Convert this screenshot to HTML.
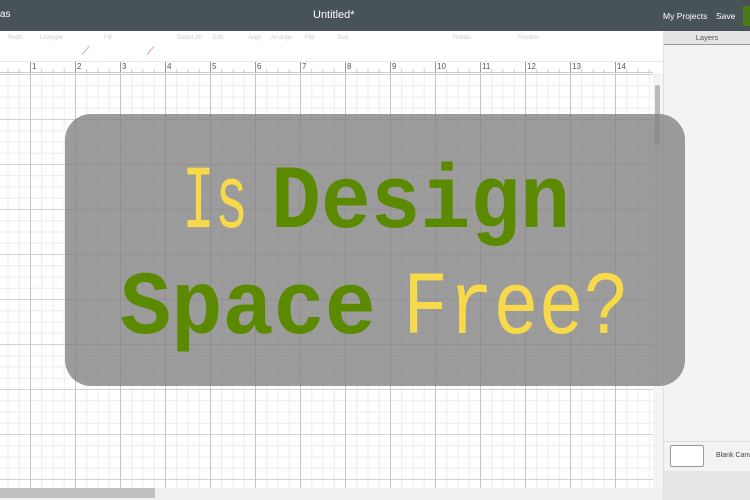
<!DOCTYPE html>
<html><head><meta charset="utf-8"><style>
*{margin:0;padding:0;box-sizing:border-box}
body{width:750px;height:500px;overflow:hidden;position:relative;background:#fff;font-family:"Liberation Sans",sans-serif}
.hdr{position:absolute;left:0;top:0;width:750px;height:31px;background:#485358;color:#fff}
.hdr span{position:absolute;top:9px;font-size:10px}
.tb{position:absolute;left:0;top:31px;width:663px;height:31px;background:#fff;border-bottom:1px solid #e8e8e8;font-size:6px;color:#ccc}
.tb span{position:absolute;top:4px}
.ruler{position:absolute;left:0;top:62px;width:653px;height:11px;background:#fff;border-bottom:1px solid #ccc;font-size:8px;color:#555;
background-image:linear-gradient(90deg,#999 1px,transparent 1px),linear-gradient(90deg,#ccc 1px,transparent 1px);background-size:45px 11px,11.25px 4px;background-position:30px 0,30px 7px;background-repeat:repeat-x}
.ruler span{position:absolute;top:0}
.grid{position:absolute;left:0;top:73px;width:653px;height:415px;background-color:#fff;
background-image:
linear-gradient(90deg,#c4c4c4 1px,transparent 1px),
linear-gradient(180deg,#d2d2d2 1px,transparent 1px),
linear-gradient(90deg,#ececec 1px,transparent 1px),
linear-gradient(180deg,#ececec 1px,transparent 1px);
background-size:45px 45px,45px 45px,11.25px 11.25px,11.25px 11.25px;
background-position:30px 1px,30px 1px,30px 1px,30px 1px}
.vs{position:absolute;left:653px;top:73px;width:10px;height:415px;background:#f4f4f4}
.vs i{position:absolute;left:2px;top:12px;width:5px;height:60px;background:#bbb;border-radius:2px}
.hs{position:absolute;left:0;top:488px;width:663px;height:12px;background:#f0f0f0}
.hs i{position:absolute;left:0;top:0;width:155px;height:10px;background:#c0c0c0}
.rp{position:absolute;left:663px;top:31px;width:87px;height:469px;background:#f3f3f3;border-left:1px solid #e0e0e0}
.box{position:absolute;left:65px;top:114px;width:620px;height:272px;border-radius:26px;background:rgba(128,128,128,.78)}
</style></head><body>
<div class="hdr"><span style="left:0">as</span><span style="left:313px;font-size:11px">Untitled*</span><span style="left:663px;font-size:8.5px;top:11px">My Projects</span><span style="left:716px;font-size:8.5px;top:11px">Save</span><div style="position:absolute;left:743px;top:6px;width:7px;height:20px;background:#4a7a1c"></div></div>
<div class="tb"><span style="left:8px">Redo</span><span style="left:40px">Linetype</span><span style="left:104px">Fill</span><span style="left:177px">Select All</span><span style="left:213px">Edit</span><span style="left:248px">Align</span><span style="left:271px">Arrange</span><span style="left:305px">Flip</span><span style="left:337px">Size</span><span style="left:453px">Rotate</span><span style="left:518px">Position</span>
<div style="position:absolute;left:85px;top:14px;width:1px;height:11px;background:#e8a0a8;transform:rotate(40deg)"></div>
<div style="position:absolute;left:150px;top:14px;width:1px;height:11px;background:#e8a0a8;transform:rotate(40deg)"></div></div>
<div class="ruler"><span style="left:32px">1</span><span style="left:77px">2</span><span style="left:122px">3</span><span style="left:167px">4</span><span style="left:212px">5</span><span style="left:257px">6</span><span style="left:302px">7</span><span style="left:347px">8</span><span style="left:392px">9</span><span style="left:437px">10</span><span style="left:482px">11</span><span style="left:527px">12</span><span style="left:572px">13</span><span style="left:617px">14</span></div>
<div class="grid"></div>
<div class="vs"><i></i></div>
<div class="hs"><i></i></div>
<div class="rp"><div style="height:14px;text-align:center;font-size:7.5px;color:#555;padding-top:2px;background:#e4e4e4;border-bottom:1px solid #999">Layers</div>
<div style="position:absolute;left:0;top:410px;width:87px;height:1px;background:#ddd"></div>
<div style="position:absolute;left:6px;top:414px;width:34px;height:22px;border:1px solid #999;background:#fff;border-radius:2px"></div>
<div style="position:absolute;left:52px;top:421px;font-size:7px;color:#444;white-space:nowrap">Blank Canvas</div>
<div style="position:absolute;left:0;top:440px;width:87px;height:29px;background:#e6e6e6"></div></div>
<div class="box"></div>
<svg style="position:absolute;left:0;top:0" width="750" height="500">
<g font-family="Liberation Mono, monospace">
<text x="182" y="227" font-size="90" fill="#f8d94a" textLength="66" lengthAdjust="spacingAndGlyphs">Is</text>
<text x="271" y="227" font-size="90" font-weight="bold" fill="#5b8a00" textLength="299" lengthAdjust="spacingAndGlyphs">Design</text>
<text x="120" y="333" font-size="90" font-weight="bold" fill="#5b8a00" textLength="256" lengthAdjust="spacingAndGlyphs">Space</text>
<text x="403" y="333" font-size="90" fill="#f8d94a" textLength="226" lengthAdjust="spacingAndGlyphs">Free?</text>
</g></svg>
</body></html>
